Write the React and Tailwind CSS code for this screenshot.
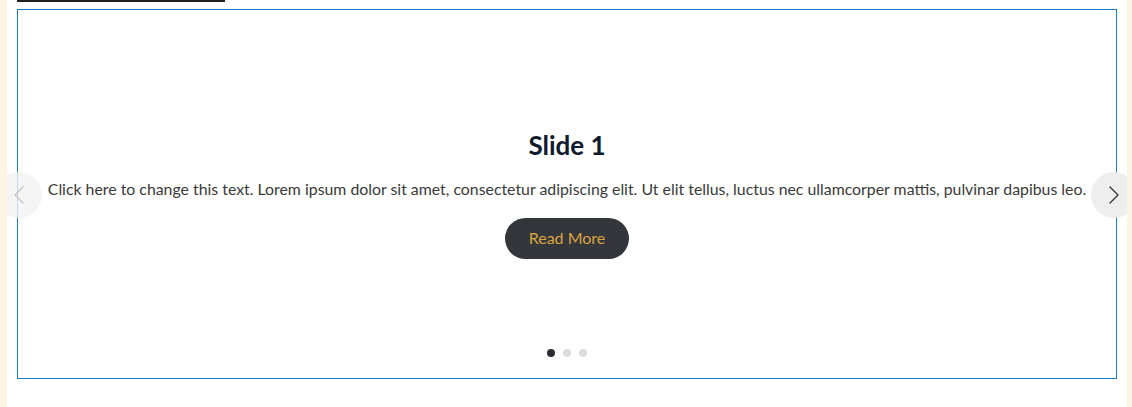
import React from 'react'

/**
 * Slider de portada: una diapositiva con título, texto, botón,
 * flechas de navegación y puntos de paginación
 */
const Arrow = ({ side }) => {
  const isLeft = side === 'left'
  return (
    <button
      className={
        isLeft
          ? 'absolute left-[-22px] top-[162px] w-[46px] h-[46px] rounded-full bg-[#f2f2f2]/80 flex items-center justify-center'
          : 'absolute left-[1073px] top-[162px] w-[46px] h-[46px] rounded-full bg-[#eeeeee] flex items-center justify-center'
      }
    >
      <svg width="10" height="18" viewBox="0 0 10 18" fill="none">
        <path
          d={isLeft ? 'M9 1L1 9l8 8' : 'M1 1l8 8-8 8'}
          stroke={isLeft ? '#c4c4c4' : '#2f3338'}
          strokeWidth="1.3"
          strokeLinecap="round"
          strokeLinejoin="round"
        />
      </svg>
    </button>
  )
}

const App = () => {
  return (
    <div className="flex h-[407px] w-[1132px] bg-[#fcf5e6] font-['Lato',sans-serif]">
      <div className="w-[7px] shrink-0" />
      <div className="relative w-[1120px] bg-white overflow-hidden">
        <div className="ml-[10px] h-[2px] w-[208px] bg-[#222222]" />
        <div className="relative ml-[10px] mt-[7px] w-[1100px] h-[370px] border border-[#1f7bc4]">
          <div className="flex flex-col items-center pt-[120px]">
            <h2 className="text-[26px] leading-[30px] font-bold text-[#0f1a2c]">Slide 1</h2>
            <p className="mt-[17px] text-[15.85px] leading-[24px] text-[#3a3a3a] whitespace-nowrap">
              Click here to change this text. Lorem ipsum dolor sit amet, consectetur adipiscing elit. Ut elit tellus, luctus nec ullamcorper mattis, pulvinar dapibus leo.
            </p>
            <button className="mt-[17px] w-[124px] h-[41px] rounded-full bg-[#33373c] text-[16px] leading-[20px] text-[#d9a441] pb-px">
              Read More
            </button>
          </div>

          <div className="absolute bottom-[21px] left-0 right-0 flex justify-center gap-2">
            <span className="w-2 h-2 rounded-full bg-[#2b2f35]" />
            <span className="w-2 h-2 rounded-full bg-[#dcdcdc]" />
            <span className="w-2 h-2 rounded-full bg-[#dcdcdc]" />
          </div>

          <Arrow side="left" />
          <Arrow side="right" />
        </div>
      </div>
      <div className="flex-1" />
    </div>
  )
}

export default App
